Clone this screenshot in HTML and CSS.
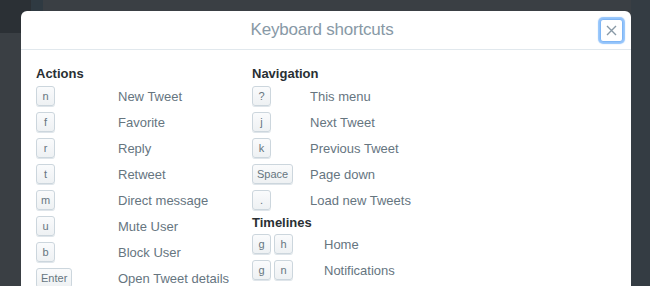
FILE: index.html
```html
<!DOCTYPE html>
<html lang="en">
<head>
  <meta charset="UTF-8" />
  <meta name="viewport" content="width=device-width, initial-scale=1" />
  <title>Keyboard shortcuts</title>
  <link rel="stylesheet" href="styles.css">
</head>
<body>

  <div class="modal">
    <div class="modal-header">
      <span></span>
      <h3 class="modal-title">Keyboard shortcuts</h3>
      <button class="modal-close" aria-label="Close">
        <svg width="11" height="11" viewBox="0 0 11 11"><path d="M1 1 L10 10 M10 1 L1 10" stroke="#8899a6" stroke-width="1.4" fill="none"/></svg>
      </button>
    </div>

    <div class="modal-body">
      <div class="shortcut-col col-actions">
        <h4>Actions</h4>
        <div class="row"><span class="keys"><kbd>n</kbd></span><span class="desc">New Tweet</span></div>
        <div class="row"><span class="keys"><kbd>f</kbd></span><span class="desc">Favorite</span></div>
        <div class="row"><span class="keys"><kbd>r</kbd></span><span class="desc">Reply</span></div>
        <div class="row"><span class="keys"><kbd>t</kbd></span><span class="desc">Retweet</span></div>
        <div class="row"><span class="keys"><kbd>m</kbd></span><span class="desc">Direct message</span></div>
        <div class="row"><span class="keys"><kbd>u</kbd></span><span class="desc">Mute User</span></div>
        <div class="row"><span class="keys"><kbd>b</kbd></span><span class="desc">Block User</span></div>
        <div class="row"><span class="keys"><kbd>Enter</kbd></span><span class="desc">Open Tweet details</span></div>
      </div>

      <div class="shortcut-col">
        <h4>Navigation</h4>
        <div class="group-nav">
          <div class="row"><span class="keys"><kbd>?</kbd></span><span class="desc">This menu</span></div>
          <div class="row"><span class="keys"><kbd>j</kbd></span><span class="desc">Next Tweet</span></div>
          <div class="row"><span class="keys"><kbd>k</kbd></span><span class="desc">Previous Tweet</span></div>
          <div class="row"><span class="keys"><kbd>Space</kbd></span><span class="desc">Page down</span></div>
          <div class="row"><span class="keys"><kbd>.</kbd></span><span class="desc">Load new Tweets</span></div>
        </div>
        <h4 class="sub-heading">Timelines</h4>
        <div class="group-timelines">
          <div class="row"><span class="keys"><kbd>g</kbd><kbd>h</kbd></span><span class="desc">Home</span></div>
          <div class="row"><span class="keys"><kbd>g</kbd><kbd>n</kbd></span><span class="desc">Notifications</span></div>
        </div>
      </div>
    </div>
  </div>

</body>
</html>
```

FILE: styles.css
```css
:root {
  --page-bg: #3a3f44;
  --page-dark: #2b3035;
  --page-right: #343c43;
  --title-color: #8899a6;
  --text-color: #292f33;
  --muted-color: #66757f;
  --border-color: #e1e8ed;
  --key-border: #ccd6dd;
  --font-main: 'Liberation Sans', Arial, sans-serif;
}

html, body {
  height: 100%;
}

body {
  margin: 0;
  overflow: hidden;
  font-family: var(--font-main);
  color: var(--text-color);
  background:
    linear-gradient(var(--page-dark), var(--page-dark)) 0 0 / 31px 33px no-repeat,
    linear-gradient(#2f3a42, #2f3a42) 31px 0 / 12px 33px no-repeat,
    linear-gradient(var(--page-right), var(--page-right)) 631px 0 / 19px 100% no-repeat,
    var(--page-bg);
}

.modal {
  margin: 11px 0 0 21px;
  width: 610px;
  height: calc(100% - 11px);
  background: #fff;
  border-radius: 6px 6px 0 0;
  overflow: hidden;
}

.modal-header {
  display: grid;
  grid-template-columns: 1fr auto 1fr;
  align-items: center;
  height: 38px;
  padding-right: 8px;
  border-bottom: 1px solid var(--border-color);
}

.modal-title {
  margin: 0;
  font-size: 17px;
  font-weight: normal;
  color: var(--title-color);
  letter-spacing: -0.2px;
}

.modal-close {
  justify-self: end;
  width: 23px;
  height: 23px;
  padding: 0;
  display: flex;
  align-items: center;
  justify-content: center;
  background: #fff;
  border: 1px solid #7fb6f5;
  border-radius: 3px;
  box-shadow: 0 0 1px 2px rgba(110, 175, 250, 0.75);
  cursor: pointer;
}

.modal-body {
  display: flex;
  padding: 16px 15px 0;
}

.shortcut-col {
  display: flex;
  flex-direction: column;
}

.col-actions {
  width: 216px;
}

h4 {
  margin: 0 0 4px;
  font-size: 13px;
  line-height: 16px;
  font-weight: bold;
  color: var(--text-color);
}

.sub-heading {
  margin: -1px 0 3px;
}

.row {
  display: flex;
  align-items: center;
  height: 20px;
  margin-bottom: 6px;
}

.keys {
  display: flex;
  gap: 3px;
  width: 82px;
  flex-shrink: 0;
}

.group-nav .keys {
  width: 58px;
}

.group-timelines .keys {
  width: 72px;
}

kbd {
  display: inline-block;
  box-sizing: border-box;
  min-width: 19px;
  height: 20px;
  padding: 0 4px;
  font-family: var(--font-main);
  font-size: 11px;
  line-height: 18px;
  text-align: center;
  color: var(--muted-color);
  background: linear-gradient(#fafbfc, #eef1f3);
  border: 1px solid var(--key-border);
  border-radius: 3px;
  box-shadow: 0 1px 0 #dfe5ea;
}

.desc {
  font-size: 13px;
  color: var(--muted-color);
  white-space: nowrap;
}
```
